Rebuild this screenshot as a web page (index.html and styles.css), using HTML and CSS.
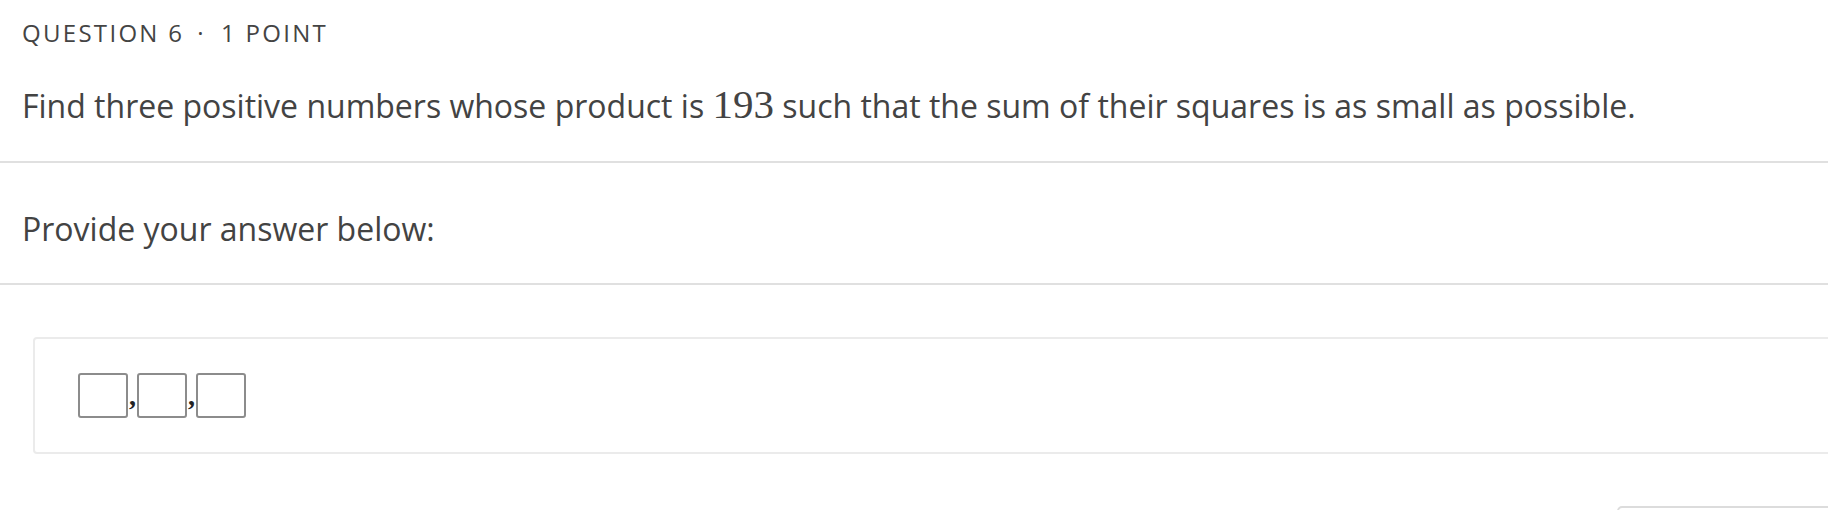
FILE: index.html
```html
<!DOCTYPE html>
<html lang="en">
<head>
<meta charset="utf-8">
<title>Question 6</title>
<link rel="stylesheet" href="styles.css">
</head>
<body>
<div class="page">
  <div class="question-header">QUESTION 6<span class="dot">·</span>1 POINT</div>
  <div class="question-body">
    <p class="question-text">Find three positive numbers whose product is <span class="math">193</span> such that the sum of their squares is as small as possible.</p>
  </div>
  <div class="prompt">
    <p class="prompt-text">Provide your answer below:</p>
  </div>
  <div class="answer-area">
    <div class="answer-box">
      <div class="blanks">
        <span class="blank"></span><span class="comma">,</span><span class="blank"></span><span class="comma">,</span><span class="blank"></span>
      </div>
    </div>
  </div>
  <div class="footer">
    <div class="footer-button"></div>
  </div>
</div>
</body>
</html>
```

FILE: styles.css
```css
html, body {
  margin: 0;
  padding: 0;
  background: #ffffff;
  overflow: hidden;
}

.page {
  width: 1880px;
  font-family: "Open Sans", "Noto Sans", sans-serif;
  color: #434343;
}

.question-header {
  padding: 18px 0 0 22px;
  font-size: 24px;
  line-height: 30px;
  letter-spacing: 2.3px;
  color: #444444;
}

.dot {
  padding: 0 15px 0 13px;
}

.question-body {
  padding: 36px 0 33px 22px;
  border-bottom: 2px solid #e0e0e0;
}

.question-text {
  margin: 0;
  font-size: 32px;
  line-height: 44px;
}

.math {
  font-family: "Liberation Serif", "Times New Roman", serif;
  font-size: 41px;
  line-height: 1;
}

.prompt {
  padding: 44px 0 32px 22px;
  border-bottom: 2px solid #e0e0e0;
}

.prompt-text {
  margin: 0;
  font-size: 32px;
  line-height: 44px;
}

.answer-area {
  padding: 52px 0 0 33px;
}

.answer-box {
  border: 2px solid #ebebeb;
  border-radius: 4px;
  padding: 34px 0 0 43px;
  box-sizing: border-box;
  height: 117px;
}

.blanks {
  display: flex;
  align-items: flex-start;
}

.blank {
  display: block;
  width: 50px;
  height: 45px;
  box-sizing: border-box;
  border: 2px solid #8c8c8c;
  border-radius: 3px;
  background: #fff;
}

.comma {
  font-family: "Liberation Serif", "Times New Roman", serif;
  font-size: 28px;
  font-weight: bold;
  line-height: 1;
  color: #222;
  padding: 9px 1px 0 1px;
}

.footer {
  display: flex;
  justify-content: flex-end;
  padding: 52px 33px 0 0;
}

.footer-button {
  width: 230px;
  height: 40px;
  border: 2px solid #dcdcdc;
  border-radius: 5px;
  box-sizing: border-box;
}
```
